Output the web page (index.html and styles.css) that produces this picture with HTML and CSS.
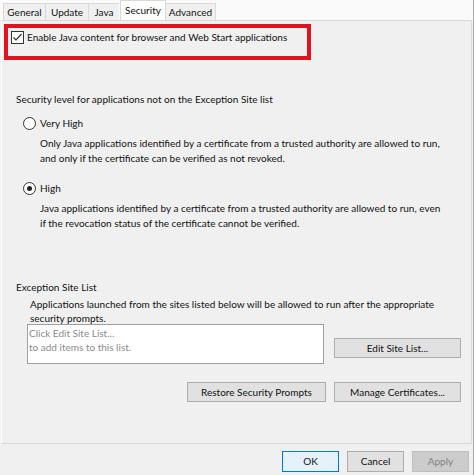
FILE: index.html
```html
<!DOCTYPE html>
<html>
<head>
<meta charset="utf-8">
<link rel="stylesheet" href="styles.css">
</head>
<body>
<div class="window">
  <div class="main">
    <div class="tabs">
      <div class="tab">General</div>
      <div class="tab">Update</div>
      <div class="tab">Java</div>
      <div class="tab selected">Security</div>
      <div class="tab">Advanced</div>
    </div>
    <div class="panel">
      <div class="highlight">
        <span class="checkbox">
          <svg width="13" height="13" viewBox="0 0 13 13"><rect x="0.5" y="0.5" width="12" height="12" fill="#fff" stroke="#333"/><path d="M2.5 6.5 L5 9 L10.5 3" fill="none" stroke="#333" stroke-width="1.2"/></svg>
        </span>
        <span>Enable Java content for browser and Web Start applications</span>
      </div>

      <div class="section-title level-title">Security level for applications not on the Exception Site list</div>

      <div class="radio-row first">
        <span class="radio"></span>
        <span>Very High</span>
      </div>
      <div class="desc">Only Java applications identified by a certificate from a trusted authority are allowed to run,<br>and only if the certificate can be verified as not revoked.</div>

      <div class="radio-row">
        <span class="radio checked"></span>
        <span>High</span>
      </div>
      <div class="desc">Java applications identified by a certificate from a trusted authority are allowed to run, even<br>if the revocation status of the certificate cannot be verified.</div>

      <div class="section-title exc-title">Exception Site List</div>
      <div class="exc-desc">Applications launched from the sites listed below will be allowed to run after the appropriate<br>security prompts.</div>

      <div class="list-row">
        <div class="listbox">
          <div>Click Edit Site List...</div>
          <div>to add items to this list.</div>
        </div>
        <div class="btn wide edit">Edit Site List...</div>
      </div>

      <div class="btn-row">
        <div class="btn restore">Restore Security Prompts</div>
        <div class="btn wide">Manage Certificates...</div>
      </div>
    </div>
    <div class="footer">
      <div class="btn small default">OK</div>
      <div class="btn small">Cancel</div>
      <div class="btn small disabled">Apply</div>
    </div>
  </div>
  <div class="edge"></div>
</div>
</body>
</html>
```
FILE: styles.css
```css
html, body {
  margin: 0;
  padding: 0;
}
body {
  font-family: "Lato", "Noto Sans", sans-serif;
  font-size: 10px;
  color: #111;
  background: #fff;
}
.window {
  width: 474px;
  height: 475px;
  display: flex;
  overflow: hidden;
}
.main {
  flex: 1;
  display: flex;
  flex-direction: column;
  background: #f0f0f0;
}
.edge {
  width: 3px;
  background: #a9a9a9;
}
.tabs {
  height: 20px;
  display: flex;
  align-items: flex-end;
  padding-left: 3px;
  background: #fafafa;
}
.tab {
  height: 17px;
  line-height: 16px;
  border: 1px solid #d9d9d9;
  border-bottom: none;
  border-right: none;
  background: #f0f0f0;
  box-sizing: border-box;
  text-align: center;
}
.tab:nth-child(1) { width: 42px; }
.tab:nth-child(2) { width: 43px; }
.tab:nth-child(3) { width: 31px; }
.tab:nth-child(5) { width: 50px; border-right: 1px solid #d9d9d9; }
.tab.selected {
  height: 20px;
  line-height: 18px;
  width: 46px;
  background: #fff;
  border-right: 1px solid #d9d9d9;
  margin-left: 1px;
}
.tab.selected + .tab { border-left: none; }
.panel {
  height: 424px;
  box-sizing: border-box;
  border: 1px solid #d9d9d9;
  border-left: 1px solid #fff;
  margin-left: 1px;
  margin-right: 1px;
  padding: 3px 10px 0 2px;
  background: #f0f0f0;
}
.highlight {
  width: 307px;
  height: 36px;
  box-sizing: border-box;
  border: 4px solid #e0141e;
  display: flex;
  align-items: flex-start;
  gap: 3px;
  padding: 2px 0 0 3px;
  line-height: 15px;
}
.checkbox {
  display: flex;
  padding-top: 1px;
}
.section-title {
  line-height: 15px;
  padding-left: 12px;
}
.level-title {
  margin-top: 32px;
}
.radio-row {
  display: flex;
  align-items: center;
  gap: 4px;
  padding-left: 19px;
  line-height: 15px;
  margin-top: 9px;
}
.radio-row + .desc { margin-top: 5px; }
.desc + .radio-row { margin-top: 15px; }
.radio {
  width: 11px;
  height: 11px;
  border: 1px solid #333;
  border-radius: 50%;
  background: #fff;
  position: relative;
}
.radio.checked::after {
  content: "";
  position: absolute;
  left: 3px;
  top: 3px;
  width: 5px;
  height: 5px;
  border-radius: 50%;
  background: #222;
}
.desc {
  padding-left: 36px;
  line-height: 15px;
}
.exc-title {
  margin-top: 49px;
}
.exc-desc {
  padding-left: 26px;
  line-height: 14px;
  margin-top: 2px;
}
.list-row {
  display: flex;
  margin-top: -1px;
  padding-left: 23px;
  gap: 10px;
}
.listbox {
  width: 297px;
  height: 40px;
  box-sizing: border-box;
  border: 1px solid #a0a0a0;
  background: #fff;
  color: #8a8a8a;
  line-height: 14px;
  padding: 1px 0 0 1px;
}
.btn {
  height: 20px;
  box-sizing: border-box;
  border: 1px solid #adadad;
  background: #e1e1e1;
  display: flex;
  align-items: center;
  justify-content: center;
  line-height: 15px;
}
.wide { width: 127px; }
.edit { margin-top: 14px; }
.restore { width: 139px; }
.btn-row {
  display: flex;
  justify-content: flex-end;
  gap: 8px;
  margin-top: 18px;
}
.footer {
  display: flex;
  justify-content: flex-end;
  gap: 8px;
  padding: 7px 4px 0 0;
}
.btn.small {
  width: 57px;
  height: 21px;
}
.btn.default {
  border: 1px solid #0078d7;
  background: #e5f1fb;
}
.btn.disabled {
  border-color: #bfbfbf;
  background: #cccccc;
  color: #838383;
}
```
